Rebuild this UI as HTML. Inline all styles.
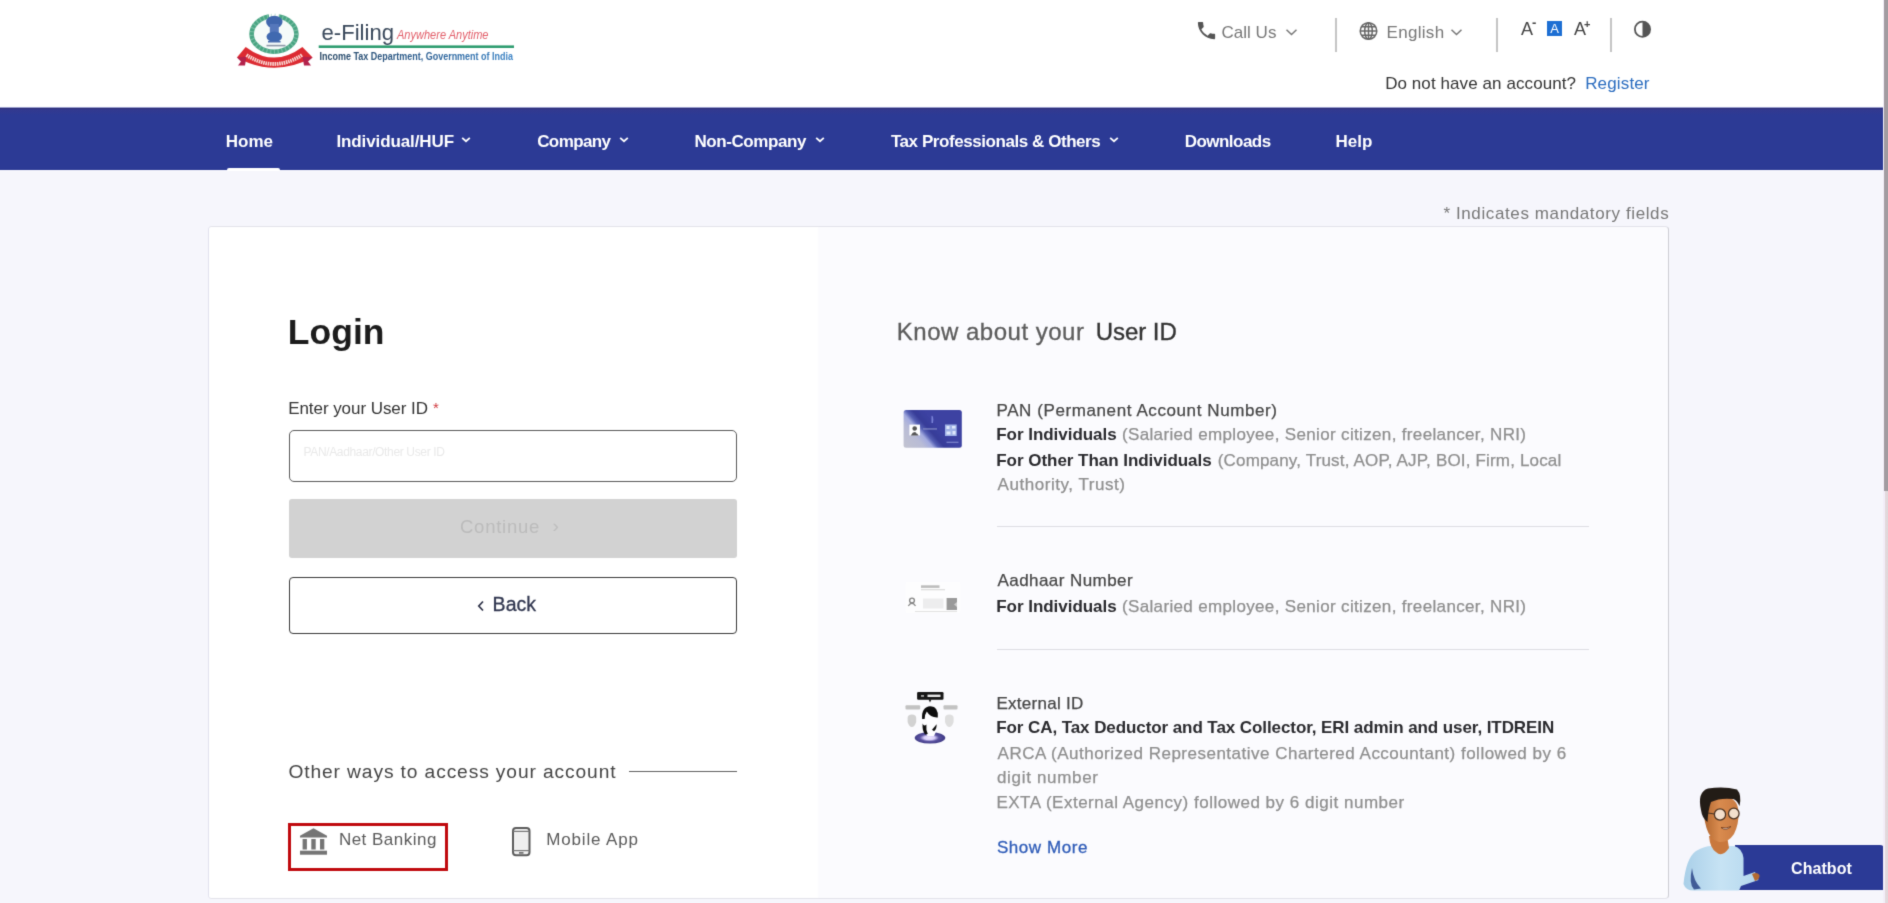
<!DOCTYPE html>
<html><head><meta charset="utf-8">
<style>
*{box-sizing:border-box;margin:0;padding:0}
html,body{width:1888px;height:903px;overflow:hidden;background:#f6f6fc;font-family:"Liberation Sans",sans-serif;}
.abs{position:absolute;white-space:nowrap}
#w{position:absolute;left:-20px;top:-20px;width:1928px;height:943px;background:#f6f6fc;filter:url(#pgb)}
#wi{position:absolute;left:20px;top:20px;width:1888px;height:903px}
#hdr{position:absolute;left:-20px;top:-20px;width:1903px;height:127px;background:#fff}
#hdr>*{transform:translate(20px,20px)}
#nav{position:absolute;left:-20px;top:107px;width:1903px;height:63px;background:linear-gradient(#9aa0cf 0,#9aa0cf 0.600px,#2b2d78 1px,#2b2d78 1.600px,#33398f 2.500px,#2c3a95 8px)}
#nav .it{position:absolute;top:0;height:64px;line-height:68px;color:#fff;font-weight:bold;font-size:17px;letter-spacing:-0.6px;white-space:nowrap}
#sb{position:absolute;left:1883px;top:-20px;width:25px;height:943px;background:linear-gradient(90deg,#f3eef8 0,#f3eef8 1.500px,#e3dadd 2.500px,#e0d7da 5px)}
#sbt{position:absolute;left:1883.500px;top:-20px;width:24.500px;height:511px;background:#a29ca1}
#card{position:absolute;left:208px;top:226px;width:1461px;height:673px;overflow:hidden;background:#fbfbfe;border:1px solid #e3e3ea;border-right-color:#cdcdd4;border-left-color:#e2e2ee;border-radius:4px}
#left{position:absolute;left:0;top:0;width:609px;height:700px;background:#fff}
.top{font-size:17px;line-height:20px;color:#777}
.sep{top:18px;width:2px;height:34px;background:#c4c4c4}
.r{font-size:17px;line-height:20px;color:#464646;-webkit-text-stroke:0.25px #464646}
.hr{width:592px;height:1px;background:#dddde3}
.nv{font-size:17px;line-height:20px;font-weight:bold;color:#fff}
.t16{font-size:16px;color:#222}
.g{color:#8e8e8e;-webkit-text-stroke:0.25px #8e8e8e}
.b{font-weight:bold;color:#2a2a2e;-webkit-text-stroke:0}
</style></head><body>
<svg width="0" height="0" style="position:absolute"><defs><filter id="pgb" x="0" y="0" width="100%" height="100%" color-interpolation-filters="sRGB"><feConvolveMatrix order="3" kernelMatrix="0.030 0.170 0.030 0.170 1 0.170 0.030 0.170 0.030" divisor="1.800" edgeMode="duplicate" preserveAlpha="true"/></filter></defs></svg>
<div id="w"><div id="wi">
<div id="hdr">
 <!-- logo -->
 <svg class="abs" style="left:230px;top:5px" width="300" height="70" viewBox="230 5 300 70">
  <defs><filter id="bl"><feGaussianBlur stdDeviation="0.700"/></filter>
  <filter id="bl2"><feGaussianBlur stdDeviation="0.350"/></filter>
  <linearGradient id="itg" x1="0" x2="1" y1="0" y2="0"><stop offset="0" stop-color="#2c4a66"/><stop offset="0.500" stop-color="#2f5f90"/><stop offset="1" stop-color="#3f86c8"/></linearGradient></defs>
  <g filter="url(#bl)">
  <ellipse cx="274" cy="33.900" rx="22.400" ry="17.800" fill="#f5fbf9" stroke="#49a583" stroke-width="4.600" pathLength="100" stroke-dasharray="92 8" stroke-dashoffset="21"/>
  <ellipse cx="274" cy="33.900" rx="22.400" ry="17.800" fill="none" stroke="#9bd0bb" stroke-width="4.600" stroke-dasharray="1.200 2.600" opacity="0.550"/>
  <ellipse cx="274.300" cy="22" rx="8.200" ry="6.300" fill="#3f66ad"/>
  <rect x="269.800" y="24" width="9" height="10" fill="#5577bb"/>
  <ellipse cx="274.300" cy="36.800" rx="7.800" ry="5.200" fill="#4169b0"/>
  <rect x="268" y="41" width="12.600" height="1.500" fill="#4a6cae"/>
  <rect x="266.500" y="44.800" width="19" height="1.600" fill="#8d97a8"/>
  <path d="M245.700 47 Q274 68.200 302.400 47 L312.600 57.600 Q274 78 236.900 57.600 Z" fill="#dc2b30"/>
  <path d="M236.900 57.600 L246.500 56.500 L245 65.500 L238 65.500 L241 61.500z" fill="#b3204c"/>
  <path d="M312.600 57.600 L302.500 56.500 L304 65.500 L311 65.500 L308 61.500z" fill="#b3204c"/>
  <path d="M246.500 55 Q274 73 302 55" fill="none" stroke="#f9d6d2" stroke-width="3.800" stroke-dasharray="1.600 0.700"/>
  </g>
  <g filter="url(#bl2)">
  <text x="321.500" y="39.500" font-family="Liberation Sans, sans-serif" font-size="22.800" fill="#3a495b" textLength="72.500" lengthAdjust="spacingAndGlyphs">e-Filing</text>
  <text x="397" y="39" font-family="Liberation Sans, sans-serif" font-size="12.500" font-style="italic" fill="#e25f6a" textLength="91.500" lengthAdjust="spacingAndGlyphs">Anywhere Anytime</text>
  <rect x="318.700" y="45.400" width="195.300" height="2.600" fill="#2f9c70"/>
  <text x="319.600" y="59.800" font-family="Liberation Sans, sans-serif" font-size="10.900" font-weight="bold" fill="url(#itg)" textLength="193.400" lengthAdjust="spacingAndGlyphs">Income Tax Department, Government of India</text>
  </g>
 </svg>
 <!-- phone -->
 <svg class="abs" style="left:1194.500px;top:18.500px" width="23" height="23" viewBox="0 0 24 24"><path fill="#555" d="M6.62 10.790c1.440 2.830 3.760 5.140 6.590 6.590l2.200-2.200c.27-.27.67-.36 1.020-.24 1.120.37 2.330.57 3.570.57.55 0 1 .45 1 1V20c0 .55-.45 1-1 1-9.390 0-17-7.610-17-17 0-.55.45-1 1-1h3.500c.55 0 1 .45 1 1 0 1.250.2 2.450.57 3.570.11.35.03.74-.25 1.020l-2.200 2.200z"/></svg>
 <div class="abs top" id="callus" style="left:1221.54px;top:22.71px;letter-spacing:0.015px">Call Us</div>
 <svg class="abs" style="left:1285px;top:27.500px" width="13" height="9" viewBox="0 0 13 9"><path d="M1.500 1.800 L6.500 6.500 L11.500 1.800" fill="none" stroke="#777" stroke-width="1.500"/></svg>
 <div class="abs sep" style="left:1335px"></div>
 <!-- globe -->
 <svg class="abs" style="left:1359px;top:21px" width="20" height="20" viewBox="0 0 20 20"><g fill="none" stroke="#666" stroke-width="1.500"><circle cx="9.500" cy="10" r="8.300"/><ellipse cx="9.500" cy="10" rx="3.800" ry="8.300"/><path d="M1.200 10H17.800M2.300 5.800H16.700M2.300 14.200H16.700M9.500 1.700V18.300"/></g></svg>
 <div class="abs top" id="english" style="left:1386.54px;top:22.71px;letter-spacing:0.303px">English</div>
 <svg class="abs" style="left:1450px;top:27.500px" width="13" height="9" viewBox="0 0 13 9"><path d="M1.500 1.800 L6.500 6.500 L11.500 1.800" fill="none" stroke="#777" stroke-width="1.500"/></svg>
 <div class="abs sep" style="left:1496px"></div>
 <div class="abs" style="left:1521px;top:18px;font-size:18px;color:#444;line-height:22px">A<span style="position:absolute;left:11px;top:-6px;font-size:13px;font-weight:bold">-</span></div>
 <div class="abs" style="left:1547px;top:21px;width:15px;height:15px;background:#1d6fd3;color:#fff;font-size:13px;line-height:16px;text-align:center">A</div>
 <div class="abs" style="left:1574px;top:18px;font-size:18px;color:#444;line-height:22px">A<span style="position:absolute;left:10px;top:-5px;font-size:11px;font-weight:bold">+</span></div>
 <div class="abs sep" style="left:1610px"></div>
 <svg class="abs" style="left:1633px;top:20px" width="19" height="19" viewBox="0 0 19 19"><circle cx="9.500" cy="9.300" r="7.600" fill="none" stroke="#555" stroke-width="1.800"/><path d="M9.500 1.700 A7.600 7.600 0 0 1 9.500 16.900 Z" fill="#555"/></svg>
 <div class="abs" id="noacc" style="left:1385.14px;top:74.11px;font-size:17px;line-height:20px;color:#333;letter-spacing:0.085px">Do not have an account?</div>
 <div class="abs" id="register" style="left:1585.16px;top:74.11px;font-size:17px;line-height:20px;color:#2a6cbf;letter-spacing:0.153px">Register</div>
</div>
<div id="nav">
 <div style="position:absolute;left:246.500px;top:61.300px;width:53px;height:3px;background:#fff;border-radius:2px 2px 0 0"></div>
</div>
<div id="n1" class="abs nv" style="left:225.78px;top:131.61px;letter-spacing:-0.006px">Home</div>
<div id="n2" class="abs nv" style="left:336.38px;top:131.61px;letter-spacing:-0.104px">Individual/HUF</div>
<div id="n3" class="abs nv" style="left:537.17px;top:131.61px;letter-spacing:-0.591px">Company</div>
<div id="n4" class="abs nv" style="left:694.38px;top:131.61px;letter-spacing:-0.402px">Non-Company</div>
<div id="n5" class="abs nv" style="left:890.92px;top:131.61px;letter-spacing:-0.437px">Tax Professionals &amp; Others</div>
<div id="n6" class="abs nv" style="left:1184.76px;top:131.61px;letter-spacing:-0.539px">Downloads</div>
<div id="n7" class="abs nv" style="left:1335.40px;top:131.61px;letter-spacing:0.024px">Help</div>
<svg class="abs" style="left:461.0px;top:136.3px" width="10" height="8" viewBox="0 0 10 8"><path d="M1.200 1.800 L5 5.200 L8.800 1.800" fill="none" stroke="#fff" stroke-width="1.800"/></svg>
<svg class="abs" style="left:618.5px;top:136.3px" width="10" height="8" viewBox="0 0 10 8"><path d="M1.200 1.800 L5 5.200 L8.800 1.800" fill="none" stroke="#fff" stroke-width="1.800"/></svg>
<svg class="abs" style="left:815.0px;top:136.3px" width="10" height="8" viewBox="0 0 10 8"><path d="M1.200 1.800 L5 5.200 L8.800 1.800" fill="none" stroke="#fff" stroke-width="1.800"/></svg>
<svg class="abs" style="left:1109.0px;top:136.3px" width="10" height="8" viewBox="0 0 10 8"><path d="M1.200 1.800 L5 5.200 L8.800 1.800" fill="none" stroke="#fff" stroke-width="1.800"/></svg>
<div id="card"><div id="left"></div></div>

<div id="mand" class="abs" style="left:1443.43px;top:204.01px;font-size:17px;line-height:20px;color:#777;letter-spacing:0.608px">* Indicates mandatory fields</div>
<!-- LEFT PANEL -->
<div id="login" class="abs" style="left:287.71px;top:311.00px;font-size:35.500px;line-height:42px;font-weight:bold;color:#1c1c1c;letter-spacing:0.042px">Login</div>
<div id="enter" class="abs" style="left:288.16px;top:398.81px;font-size:17px;line-height:20px;color:#333;letter-spacing:-0.057px">Enter your User ID</div>
<div class="abs" style="left:433px;top:398px;font-size:15px;line-height:20px;color:#d0393e">*</div>
<div class="abs" style="left:289px;top:430px;width:448px;height:52px;border:1.500px solid #5a5a5a;border-radius:5px;background:#fff"></div>
<div id="ph" class="abs" style="left:303.500px;top:442px;font-size:12px;line-height:20px;color:#e9e9e9;letter-spacing:-0.35px">PAN/Aadhaar/Other User ID</div>
<div class="abs" style="left:289px;top:499px;width:448px;height:59px;background:#d2d2d2;border-radius:3px"></div>
<div id="cont" class="abs" style="left:460px;top:516px;font-size:18.500px;line-height:22px;color:#bbbbbb;letter-spacing:0.75px">Continue</div>
<div class="abs" style="left:552.500px;top:515px;font-size:19px;line-height:22px;color:#bdbdbd">&#8250;</div>
<div class="abs" style="left:289px;top:577px;width:448px;height:57px;border:1.500px solid #3a3a3a;border-radius:4px;background:#fff"></div>
<svg class="abs" style="left:476px;top:599.300px" width="10" height="14" viewBox="0 0 10 14"><path d="M7 2.500 L2.800 7 L7 11.500" fill="none" stroke="#2b2f45" stroke-width="1.700"/></svg>
<div id="back" class="abs" style="left:492.62px;top:592.14px;font-size:19.500px;line-height:24px;color:#30364f;-webkit-text-stroke:0.3px #30364f;letter-spacing:0.026px">Back</div>
<div id="other" class="abs" style="left:288.44px;top:761.15px;font-size:19.2px;line-height:22px;color:#444;letter-spacing:0.890px">Other ways to access your account</div>
<div class="abs" style="left:628.500px;top:771px;width:108.500px;height:1px;background:#606060"></div>
<div class="abs" style="left:288px;top:823px;width:160px;height:48px;border:3px solid #c00a0e"></div>
<!-- bank -->
<svg class="abs" style="left:299px;top:827px" width="30" height="30" viewBox="299 827 30 30"><g fill="#757575"><path d="M313.500 828.300 L327 835.800 L327 837.600 L300 837.600 L300 835.800 Z"/><rect x="302.600" y="839" width="4.300" height="10.500"/><rect x="311.300" y="839" width="4.400" height="10.500"/><rect x="320" y="839" width="4.300" height="10.500"/><rect x="300" y="850.700" width="27" height="4"/></g></svg>
<div id="netb" class="abs" style="left:338.92px;top:830.21px;font-size:17px;line-height:20px;color:#5a5a5a;letter-spacing:0.490px">Net Banking</div>
<!-- mobile -->
<svg class="abs" style="left:510px;top:825px" width="22" height="33" viewBox="510 825 22 33"><rect x="513" y="828" width="16.500" height="27.300" rx="3" fill="#efefef" stroke="#5c5c5c" stroke-width="2"/><rect x="513" y="830.800" width="16.500" height="1.200" fill="#777"/><rect x="513" y="850" width="16.500" height="1.200" fill="#777"/><rect x="519" y="852.200" width="4.500" height="1.400" fill="#555"/></svg>
<div id="moba" class="abs" style="left:546.18px;top:830.21px;font-size:17px;line-height:20px;color:#5a5a5a;letter-spacing:0.859px">Mobile App</div>

<!-- RIGHT PANEL -->
<div id="know" class="abs" style="left:896.84px;top:317.48px;font-size:24px;line-height:30px;color:#5c5c5c;-webkit-text-stroke:0.3px #5c5c5c;letter-spacing:0.498px">Know about your</div>
<div id="uid" class="abs" style="left:1095.69px;top:317.48px;font-size:24px;line-height:30px;color:#333;-webkit-text-stroke:0.35px #333;letter-spacing:-0.045px">User ID</div>

<div class="abs r" id="r1" style="left:996.48px;top:400.61px;letter-spacing:0.593px">PAN (Permanent Account Number)</div>
<div class="abs r b" id="r2a" style="left:996.26px;top:425.31px;letter-spacing:-0.036px">For Individuals</div>
<div class="abs r g" id="r2b" style="left:1122.01px;top:425.31px;letter-spacing:0.344px">(Salaried employee, Senior citizen, freelancer, NRI)</div>
<div class="abs r b" id="r3a" style="left:996.26px;top:450.61px;letter-spacing:-0.035px">For Other Than Individuals</div>
<div class="abs r g" id="r3b" style="left:1217.76px;top:450.61px;letter-spacing:0.170px">(Company, Trust, AOP, AJP, BOI, Firm, Local</div>
<div class="abs r g" id="r4" style="left:997.55px;top:475.31px;letter-spacing:0.545px">Authority, Trust)</div>
<div class="abs hr" style="left:997px;top:526px"></div>

<div class="abs r" id="r5" style="left:997.47px;top:571.11px;letter-spacing:0.440px">Aadhaar Number</div>
<div class="abs r b" id="r6a" style="left:996.26px;top:596.71px;letter-spacing:-0.036px">For Individuals</div>
<div class="abs r g" id="r6b" style="left:1122.01px;top:596.71px;letter-spacing:0.344px">(Salaried employee, Senior citizen, freelancer, NRI)</div>
<div class="abs hr" style="left:997px;top:649px"></div>

<div class="abs r" id="r7" style="left:996.48px;top:693.51px;letter-spacing:0.263px">External ID</div>
<div class="abs r b" id="r8" style="left:996.26px;top:718.31px;letter-spacing:-0.081px">For CA, Tax Deductor and Tax Collector, ERI admin and user, ITDREIN</div>
<div class="abs r g" id="r9" style="left:997.55px;top:743.61px;letter-spacing:0.497px">ARCA (Authorized Representative Chartered Accountant) followed by 6</div>
<div class="abs r g" id="r10" style="left:996.98px;top:768.21px;letter-spacing:0.675px">digit number</div>
<div class="abs r g" id="r11" style="left:996.42px;top:793.21px;letter-spacing:0.509px">EXTA (External Agency) followed by 6 digit number</div>
<div class="abs" id="showm" style="left:996.91px;top:838.21px;font-size:17px;line-height:20px;color:#2f5cb8;-webkit-text-stroke:0.3px #2f5cb8;letter-spacing:0.568px">Show More</div>


<!-- PAN card icon -->
<svg class="abs" style="left:900px;top:406px" width="66" height="46" viewBox="900 406 66 46">
 <defs><linearGradient id="pg" gradientUnits="userSpaceOnUse" x1="903.600" y1="447.700" x2="933.700" y2="421.400"><stop offset="0" stop-color="#c2c3d0"/><stop offset="0.400" stop-color="#b9bcd6"/><stop offset="0.560" stop-color="#a3abdf"/><stop offset="0.660" stop-color="#5660b4"/><stop offset="0.780" stop-color="#373c98"/><stop offset="1" stop-color="#3c42a2"/></linearGradient>
 <filter id="b1"><feGaussianBlur stdDeviation="0.600"/></filter></defs>
 <g filter="url(#b1)">
 <rect x="903.600" y="410" width="58.200" height="37.700" rx="2.500" fill="url(#pg)"/>
 <rect x="909.400" y="424.600" width="10.600" height="10.800" fill="#fff"/>
 <circle cx="914.700" cy="428.500" r="2.300" fill="#555"/><path d="M910.800 435.400 Q914.700 428.500 918.600 435.400Z" fill="#555"/>
 <rect x="916.200" y="430" width="1.600" height="3.500" fill="#fff"/>
 <path d="M931.500 416 q1.500 -1 1.800 3.500 l-0.300 3.500 h-1.500 z" fill="#7a83d8"/>
 <rect x="923" y="428.300" width="14" height="1.300" fill="#8088c4"/>
 <rect x="945" y="424.500" width="11.700" height="11.500" fill="#9fb2e6"/>
 <path d="M946.500 426h3v3h-3zM952 426h3.500v2.500h-3.500zM946.500 431.500h4v3h-4zM952.500 431h3v3.500h-3z" fill="#dfe8fb"/>
 <rect x="946.500" y="441.700" width="12" height="1.200" fill="#7d86cc"/>
 </g>
</svg>
<!-- Aadhaar icon -->
<svg class="abs" style="left:900px;top:578px" width="66" height="40" viewBox="900 578 66 40">
 <g filter="url(#b1)">
 <rect x="905.500" y="582" width="55" height="31" rx="2" fill="#fdfdfe"/>
 <rect x="921" y="585.300" width="18.500" height="2.600" fill="#bdbdbd"/>
 <rect x="921" y="589" width="24" height="1.300" fill="#dedede"/>
 <rect x="923" y="598.500" width="20.500" height="10" fill="#ededee"/>
 <circle cx="912" cy="600.500" r="2.400" fill="none" stroke="#888" stroke-width="1.400"/><path d="M908.300 606 Q912 600.500 915.500 606" fill="none" stroke="#888" stroke-width="1.300"/>
 <rect x="946.600" y="598" width="10.400" height="12" fill="#9a9a9a"/>
 <path d="M957 602 l-3 2.500 l3 2.500z" fill="#cfcfcf"/>
 <rect x="915" y="611" width="42" height="1" fill="#e2e2e2"/>
 </g>
</svg>
<!-- External ID icon -->
<svg class="abs" style="left:900px;top:688px" width="66" height="60" viewBox="900 688 66 60">
 <defs><radialGradient id="eg" cx="0.480" cy="0.500" r="0.500"><stop offset="0" stop-color="#efe9ff"/><stop offset="0.350" stop-color="#d9d0fa"/><stop offset="0.620" stop-color="#5a52a0"/><stop offset="1" stop-color="#3f3a86"/></radialGradient></defs>
 <g filter="url(#b1)">
 <ellipse cx="930" cy="737.800" rx="15.300" ry="5.800" fill="url(#eg)"/>
 <rect x="917.100" y="692" width="26.400" height="7.800" rx="1.200" fill="#151515"/>
 <rect x="921" y="695.300" width="3" height="1.300" fill="#ddd"/><rect x="927.500" y="694.600" width="13" height="2.400" fill="#e8e8e8"/>
 <path d="M928.600 699.500 h2.800 l-1.400 3z" fill="#151515"/>
 <rect x="905.500" y="705.200" width="14.700" height="4.200" rx="1" fill="#c2c2c2"/>
 <rect x="943.500" y="705.200" width="14" height="4.200" rx="1" fill="#c2c2c2"/>
 <path d="M907.600 718 q0 -3.500 4.300 -3.500 q4.300 0 4.300 3.500 v4 q-1.500 5 -4.300 5 q-2.800 0 -4.300 -5z" fill="#d2d2d2"/>
 <path d="M945 718 q0 -3.500 4.300 -3.500 q4.300 0 4.300 3.500 v4 q-1.500 5 -4.300 5 q-2.800 0 -4.300 -5z" fill="#dedede"/>
 <path d="M923.500 716 q0.500 -9 7.500 -9 q6.500 0 6.200 10 v10 q-1 6 -3.200 9 h-6.500 q-3.500 -5 -4 -10z" fill="#fdfdff"/>
 <path d="M922.100 719 Q921.300 706.600 930.500 706.200 Q938.600 706.600 937.800 717.400 Q930.500 717.800 926.800 711.500 Q924.900 714 924.600 719z" fill="#0a0a0a"/>
 <path d="M922.600 723.500 Q924 727 926.400 724.500 Q925.800 730 927.800 734 L925 734.500 Q922 730 922.600 723.500z" fill="#111"/>
 <path d="M936.600 724.300 Q937 729 934 731.200 L932 729.800 Q934 727.500 936.600 724.300z" fill="#111"/>
 </g>
</svg>
<!-- chatbot -->
<div class="abs" style="left:1735px;top:845px;width:149px;height:45px;background:#2b3a96;border-radius:0 4px 0 0"></div>
<svg class="abs" style="left:1676px;top:782px" width="90" height="112" viewBox="1676 782 90 112">
 <defs><linearGradient id="sh" x1="0" x2="1" y1="0" y2="0"><stop offset="0" stop-color="#a9cfe8"/><stop offset="0.500" stop-color="#c7e3f4"/><stop offset="1" stop-color="#b4d7ee"/></linearGradient>
 <linearGradient id="sk" x1="0" x2="1" y1="0" y2="0"><stop offset="0" stop-color="#b0662f"/><stop offset="0.450" stop-color="#d98b4f"/><stop offset="1" stop-color="#c97a40"/></linearGradient></defs>
 <g filter="url(#bl)">
 <!-- body -->
 <path d="M1683.500 884 Q1686 858 1696 851 Q1706 845.500 1712 846 L1734 846 Q1742 848 1743.500 858 L1743.500 876 L1755 872 L1758.500 880 L1741 886 L1739 890.500 L1696 890.500 Q1686 891.500 1683.500 884z" fill="url(#sh)"/>
 <path d="M1692 868 Q1693.500 881 1701 888.500 L1694 889.500 Q1688.500 884 1692 868z" fill="#2c4688" opacity="0.850"/>
 <!-- hand -->
 <path d="M1752 874 Q1757 871.500 1759.500 875 Q1760 879.500 1755 881z" fill="#b46a33"/>
 <!-- neck -->
 <path d="M1709 836 L1727 836 L1729 848 Q1722 858 1716 852 Q1710 848 1709 836z" fill="#c9783d"/>
 <!-- face -->
 <path d="M1704 806 Q1706 796 1722 796 Q1738 797 1738.500 812 Q1739 824 1734 834 Q1728 843 1719 842 Q1710 840 1706.500 828 Q1703 816 1704 806z" fill="url(#sk)"/>
 <!-- hair -->
 <path d="M1701 810 Q1697 792 1708 788.500 Q1724 786 1737 789.500 Q1742 795 1739.500 806 Q1737 800 1733 799 Q1720 797.500 1711 802 Q1708 810 1707.500 822 Q1702 818 1701 810z" fill="#231a16"/>
 <!-- glasses -->
 <circle cx="1720" cy="814.500" r="5.600" fill="#f3dfcc" stroke="#4a3323" stroke-width="1.300"/>
 <circle cx="1733.800" cy="813.500" r="5.300" fill="#f3dfcc" stroke="#4a3323" stroke-width="1.300"/>
 <path d="M1708 813 L1714.500 814" stroke="#4a3323" stroke-width="1"/>
 <!-- mouth -->
 <path d="M1721 827.500 Q1726 831.500 1731 826.500 Q1726 829 1721 827.500z" fill="#fff" stroke="#6b3518" stroke-width="0.800"/>
 </g>
</svg>
<div id="chat" class="abs" style="left:1791.04px;top:859.06px;font-size:16px;line-height:20px;font-weight:bold;color:#fff;letter-spacing:0.072px">Chatbot</div>
<div id="sb"></div><div id="sbt"></div>
</div></div>
</body></html>
